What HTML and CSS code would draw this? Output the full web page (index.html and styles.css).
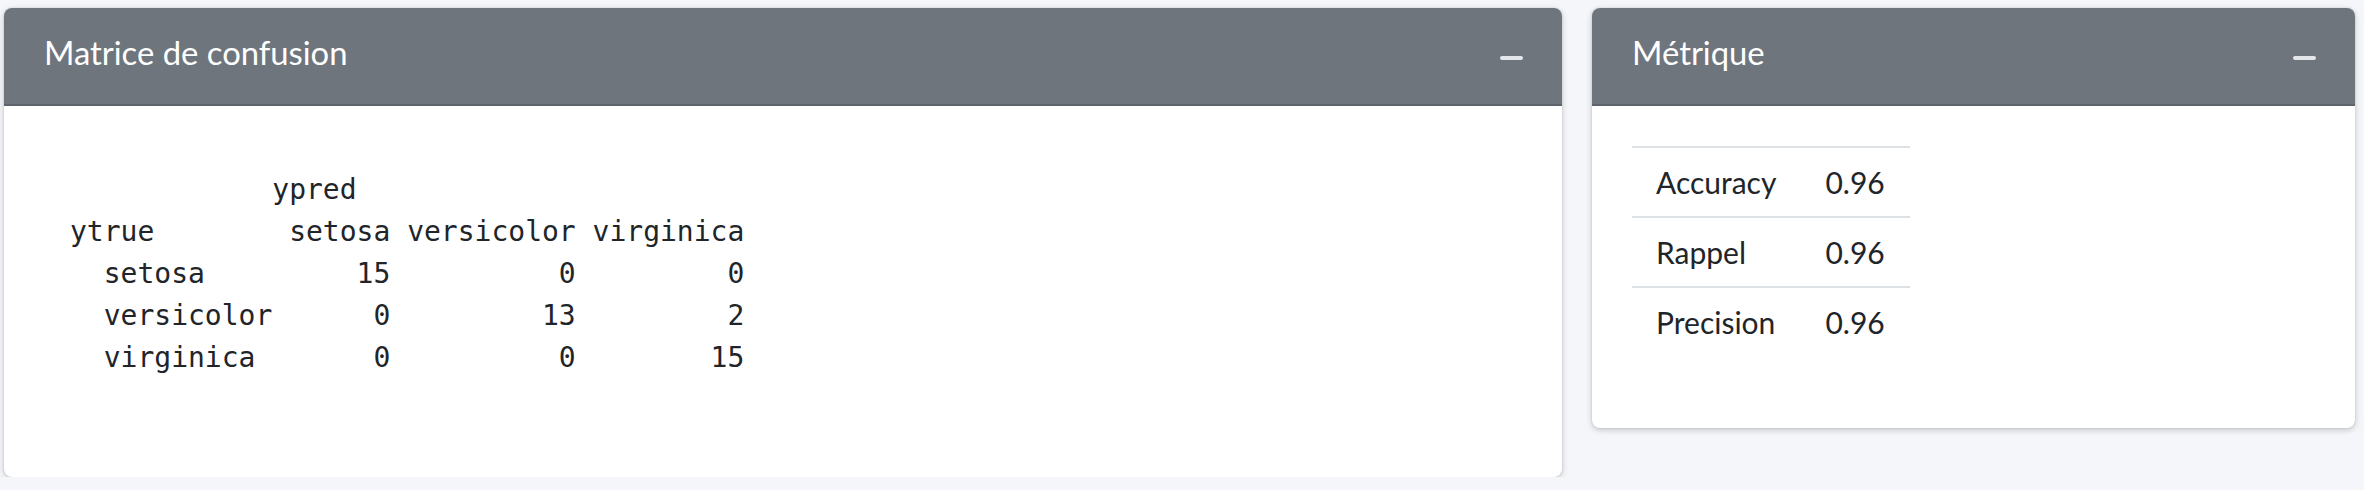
FILE: index.html
```
<!DOCTYPE html>
<html lang="fr">
<head>
<meta charset="utf-8">
<title>Évaluation</title>
<link rel="stylesheet" href="styles.css">
</head>
<body>
<div class="row">
  <section class="card card-wide">
    <header class="card-header">
      <h3 class="card-title">Matrice de confusion</h3>
      <button class="tool" type="button" aria-label="Réduire"><span class="minus"></span></button>
    </header>
    <div class="card-body">
<pre class="output">            ypred
ytrue        setosa versicolor virginica
  setosa         15          0         0
  versicolor      0         13         2
  virginica       0          0        15</pre>
    </div>
  </section>
  <section class="card card-narrow">
    <header class="card-header">
      <h3 class="card-title">Métrique</h3>
      <button class="tool" type="button" aria-label="Réduire"><span class="minus"></span></button>
    </header>
    <div class="card-body">
      <table class="metrics">
        <tbody>
          <tr><td>Accuracy</td><td>0.96</td></tr>
          <tr><td>Rappel</td><td>0.96</td></tr>
          <tr><td>Precision</td><td>0.96</td></tr>
        </tbody>
      </table>
    </div>
  </section>
</div>
</body>
</html>
```
FILE: styles.css
```
html, body {
  margin: 0;
  padding: 0;
}
body {
  background: #f4f6f9;
  font-family: Lato, "Noto Sans", sans-serif;
  color: #212529;
}
.row {
  display: grid;
  grid-template-columns: 1558px 763px;
  column-gap: 30px;
  align-items: start;
  padding: 8px 0 0 4px;
}
.card {
  background: #fff;
  border-radius: 8px;
  box-shadow: 0 0 2px rgba(0,0,0,.13), 0 2px 6px rgba(0,0,0,.2);
  overflow: hidden;
}
.card-header {
  display: flex;
  align-items: flex-start;
  box-sizing: border-box;
  height: 98px;
  padding: 25px 39px 0 40px;
  background: #6e757d;
  border-bottom: 2px solid #5d646b;
  color: #fff;
}
.card-title {
  margin: 0;
  font-weight: 400;
  font-size: 32.8px;
  line-height: 39px;
}
.tool {
  margin: 23px 0 0 auto;
  padding: 0;
  border: 0;
  background: transparent;
  width: 23px;
  height: 4px;
  display: flex;
}
.minus {
  display: block;
  width: 23px;
  height: 4px;
  border-radius: 2px;
  background: #e4e7ea;
}
.card-body {
  padding: 40px;
}
.output {
  margin: 0 0 35px;
  padding: 23px 26px;
  font-family: "DejaVu Sans Mono", monospace;
  font-size: 28px;
  line-height: 42px;
  color: #212529;
}
.metrics {
  border-collapse: collapse;
  margin-bottom: 32px;
  font-size: 30px;
  line-height: 46px;
}
.metrics td {
  border-top: 2px solid #dee2e6;
  padding: 11px 25px 11px 24px;
}
```
